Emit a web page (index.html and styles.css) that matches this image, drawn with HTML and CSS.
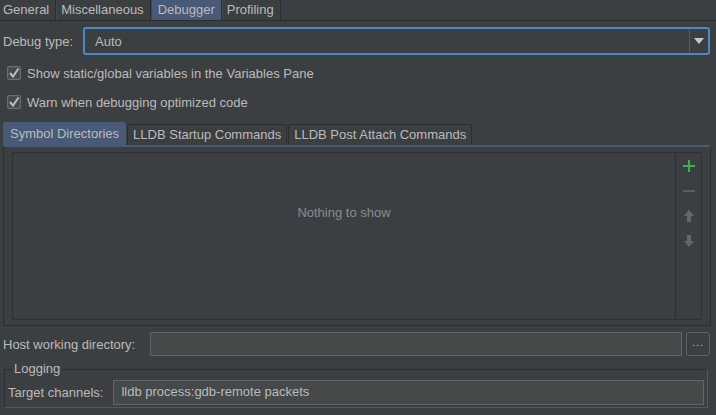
FILE: index.html
```html
<!DOCTYPE html>
<html lang="en">
<head>
    <meta charset="UTF-8">
    <title>Debugger Settings</title>
    <link rel="stylesheet" href="styles.css">
</head>
<body>
    <div class="tabs">
        <div class="tab">General</div>
        <div class="tab">Miscellaneous</div>
        <div class="tab selected">Debugger</div>
        <div class="tab">Profiling</div>
    </div>

    <div class="row debug-row">
        <span class="label">Debug type:</span>
        <div class="combo">
            <span class="combo-value">Auto</span>
            <span class="combo-arrow">
                <svg width="10" height="6" viewBox="0 0 10 6"><path d="M0 0H10L5 6Z" fill="#c8c8c8"/></svg>
            </span>
        </div>
    </div>

    <label class="check first">
        <svg class="box" width="14" height="14" viewBox="0 0 14 14">
            <rect x="0.5" y="0.5" width="13" height="13" rx="1.5" fill="#5a5d5f" stroke="#6b6e70"/>
            <rect x="1.5" y="1.5" width="11" height="11" fill="#45494a"/>
            <path d="M3 7 L6 10.5 L11.5 2.5" fill="none" stroke="#bdbdbd" stroke-width="2"/>
        </svg>
        Show static/global variables in the Variables Pane
    </label>
    <label class="check">
        <svg class="box" width="14" height="14" viewBox="0 0 14 14">
            <rect x="0.5" y="0.5" width="13" height="13" rx="1.5" fill="#5a5d5f" stroke="#6b6e70"/>
            <rect x="1.5" y="1.5" width="11" height="11" fill="#45494a"/>
            <path d="M3 7 L6 10.5 L11.5 2.5" fill="none" stroke="#bdbdbd" stroke-width="2"/>
        </svg>
        Warn when debugging optimized code
    </label>

    <div class="subtabs">
        <div class="subtab selected">Symbol Directories</div>
        <div class="subtab">LLDB Startup Commands</div>
        <div class="subtab">LLDB Post Attach Commands</div>
    </div>
    <div class="panel">
        <div class="listbox">
            <div class="list">Nothing to show</div>
            <div class="toolbar">
                <svg width="14" height="14" viewBox="0 0 14 14"><path d="M7 1V13M1 7H13" stroke="#3fae52" stroke-width="2"/></svg>
                <svg width="14" height="14" viewBox="0 0 14 14"><path d="M1 7H13" stroke="#5b5e60" stroke-width="2"/></svg>
                <svg width="14" height="14" viewBox="0 0 14 14"><path d="M7 1L12 7H9V13H5V7H2Z" fill="#65686a"/></svg>
                <svg width="14" height="14" viewBox="0 0 14 14"><path d="M7 13L12 7H9V1H5V7H2Z" fill="#65686a"/></svg>
            </div>
        </div>
    </div>

    <div class="row host-row">
        <span class="label">Host working directory:</span>
        <div class="field"></div>
        <button class="browse">...</button>
    </div>

    <fieldset class="logging">
        <legend>Logging</legend>
        <div class="row">
            <span class="label">Target channels:</span>
            <div class="field">lldb process:gdb-remote packets</div>
        </div>
    </fieldset>
</body>
</html>
```

FILE: styles.css
```css
* {
    box-sizing: border-box;
}

body {
    margin: 0;
    width: 716px;
    height: 415px;
    overflow: hidden;
    background-color: #3c3f41;
    color: #bbbbbb;
    font-family: "Liberation Sans", Arial, sans-serif;
    font-size: 13px;
}

.tabs {
    display: flex;
    height: 21px;
    border-bottom: 1px solid #2b2d2e;
}

.tab {
    padding: 0 6px 0 4px;
    line-height: 20px;
    border-right: 1px solid #2b2d2e;
    border-left: 1px solid #44484a;
}

.tab:first-child {
    border-left: none;
    padding-left: 3px;
}

.tab.selected {
    background-color: #485a78;
    padding-left: 6px;
}

.row {
    display: flex;
    align-items: center;
}

.label {
    white-space: nowrap;
}

.debug-row {
    margin: 6px 6px 0 3px;
    height: 28px;
}

.combo {
    flex: 1;
    display: flex;
    align-items: center;
    height: 28px;
    margin-left: 10px;
    border: 2px solid #4a88c7;
    border-radius: 3px;
}

.combo-value {
    flex: 1;
    padding-left: 10px;
}

.combo-arrow {
    width: 19px;
    height: 100%;
    display: flex;
    align-items: center;
    justify-content: center;
    border-left: 1px solid #5a5d5f;
}

.check {
    display: flex;
    align-items: center;
    gap: 6px;
    height: 16px;
    margin-left: 7px;
    margin-top: 13px;
}

.check.first {
    margin-top: 10px;
}

.subtabs {
    display: flex;
    margin: 12px 0 0 3px;
    height: 23px;
    align-items: flex-end;
}

.subtab {
    height: 21px;
    padding: 0 5px;
    line-height: 20px;
    border: 1px solid #2b2d2e;
    border-bottom: none;
    border-radius: 3px 3px 0 0;
    margin-right: 1px;
}

.subtab.selected {
    height: 23px;
    line-height: 22px;
    background-color: #485a78;
    border-color: #485a78;
    padding: 0 6px;
}

.panel {
    margin: 0 5px 0 3px;
    height: 181px;
    border: 1px solid #2b2d2e;
    border-top: 2px solid #485a78;
    padding: 5px 8px 5px 8px;
}

.listbox {
    display: flex;
    height: 100%;
    border: 1px solid #2f3133;
}

.list {
    flex: 1;
    text-align: center;
    padding-top: 52px;
    color: #8a8c8e;
    border-right: 1px solid #2f3133;
}

.toolbar {
    width: 25px;
    display: flex;
    flex-direction: column;
    align-items: center;
    gap: 11px;
    padding-top: 6px;
}

.field {
    flex: 1;
    height: 24px;
    line-height: 22px;
    padding-left: 7px;
    background-color: #45494a;
    border: 1px solid #646464;
}

.host-row {
    margin: 6px 6px 0 3px;
}

.host-row .label {
    width: 147px;
}

.browse {
    width: 24px;
    height: 24px;
    margin-left: 4px;
    padding: 0 0 4px;
    background-color: #3c3f41;
    border: 1px solid #5e6060;
    border-radius: 3px;
    color: #bbbbbb;
    font-family: inherit;
    font-size: 11px;
    letter-spacing: 1px;
}

.logging {
    margin: 7px 8px 0 4px;
    padding: 5px 3px 2px 3px;
    border: 1px solid #2b2d2e;
    border-bottom-color: #555859;
    border-right-color: #555859;
}

.logging legend {
    padding: 0 2px;
    margin-left: 4px;
    line-height: 12px;
}

.logging .field {
    margin-left: 10px;
    height: 25px;
}
```
